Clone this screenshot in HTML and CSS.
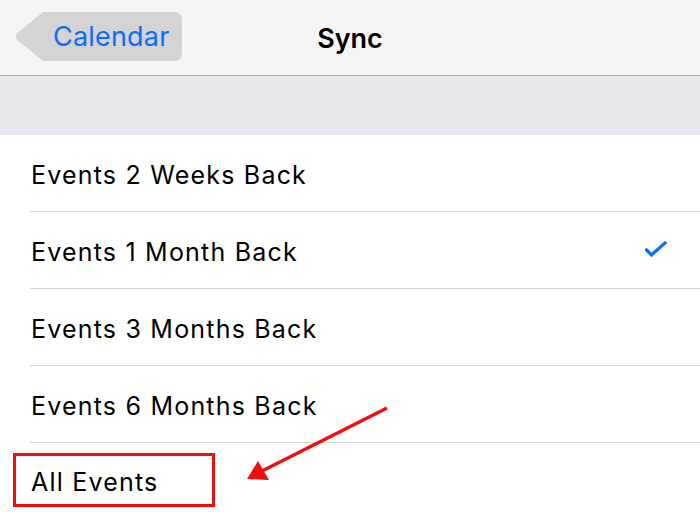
FILE: index.html
```html
<!DOCTYPE html>
<html lang="en">
<head>
    <meta charset="UTF-8">
    <meta name="viewport" content="width=device-width, initial-scale=1.0">
    <title>Sync</title>
    <link rel="stylesheet" href="styles.css">
</head>
<body>
    <div class="screen">
        <header class="nav-bar">
            <div class="nav-left">
                <a class="back-btn" href="#">
                    <span class="back-tip"></span>
                    <span class="back-label">Calendar</span>
                </a>
            </div>
            <h1 class="nav-title">Sync</h1>
            <div class="nav-right"></div>
        </header>

        <div class="group-header"></div>

        <ul class="options">
            <li class="option"><div class="option-inner">Events 2 Weeks Back</div></li>
            <li class="option">
                <div class="option-inner">
                    Events 1 Month Back
                    <svg class="check" width="22" height="17" viewBox="0 0 22 17">
                        <path d="M1.5 9 L6.5 14 L20 2" fill="none" stroke="#0a6cfd" stroke-width="3.2" stroke-linecap="square"/>
                    </svg>
                </div>
            </li>
            <li class="option"><div class="option-inner">Events 3 Months Back</div></li>
            <li class="option"><div class="option-inner">Events 6 Months Back</div></li>
            <li class="option option-last"><span class="highlight">All Events</span></li>
        </ul>

        <!-- annotation arrow -->
        <svg class="annotation" width="700" height="513" viewBox="0 0 700 513">
            <line x1="387" y1="408" x2="262" y2="471" stroke="#f00f0f" stroke-width="3.5"/>
            <polygon points="247,479 258,461 269,480" fill="#f00f0f"/>
        </svg>
    </div>
</body>
</html>
```

FILE: styles.css
```css
body {
    margin: 0;
    font-family: Inter, "Liberation Sans", Arial, sans-serif;
    background: #fff;
    overflow: hidden;
}
.screen {
    position: relative;
    width: 700px;
    height: 513px;
    overflow: hidden;
}
.nav-bar {
    height: 75px;
    background-color: #f5f5f5;
    border-bottom: 1px solid #a9a9ab;
    display: grid;
    grid-template-columns: 1fr auto 1fr;
    align-items: center;
}
.nav-left {
    padding-left: 16px;
    padding-top: 2px;
}
.back-btn {
    display: inline-flex;
    height: 49px;
    text-decoration: none;
}
.back-tip {
    width: 27px;
    background-color: #d4d4d4;
    clip-path: polygon(100% 0, 3% 44%, 0 50%, 3% 56%, 100% 100%);
}
.back-label {
    display: flex;
    align-items: center;
    padding: 0 12px 0 10px;
    background-color: #d4d4d4;
    border-radius: 0 7px 7px 0;
    color: #0a6cfd;
    font-size: 27px;
    letter-spacing: 0.2px;
}
.nav-title {
    margin: 0;
    font-size: 27px;
    font-weight: 600;
    color: #000;
    padding-top: 2px;
}
.group-header {
    height: 59px;
    background-color: #e9e8ee;
}
.options {
    list-style: none;
    margin: 0;
    padding: 0;
}
.option {
    padding-left: 30px;
    font-size: 25px;
    letter-spacing: 1.2px;
    color: #000;
}
.option-inner {
    border-bottom: 1px solid #d6d6d9;
    display: flex;
    align-items: center;
    justify-content: space-between;
    padding: 3px 33px 0 1px;
    box-sizing: border-box;
    height: 77px;
}
.check {
    display: block;
    margin-bottom: 5px;
}
.option-last {
    padding: 10px 0 0 13px;
}
.highlight {
    display: inline-flex;
    align-items: center;
    box-sizing: border-box;
    width: 202px;
    height: 54px;
    padding: 4px 0 0 15px;
    border: 3px solid #f00f0f;
}
.annotation {
    position: absolute;
    left: 0;
    top: 0;
    pointer-events: none;
}
```
